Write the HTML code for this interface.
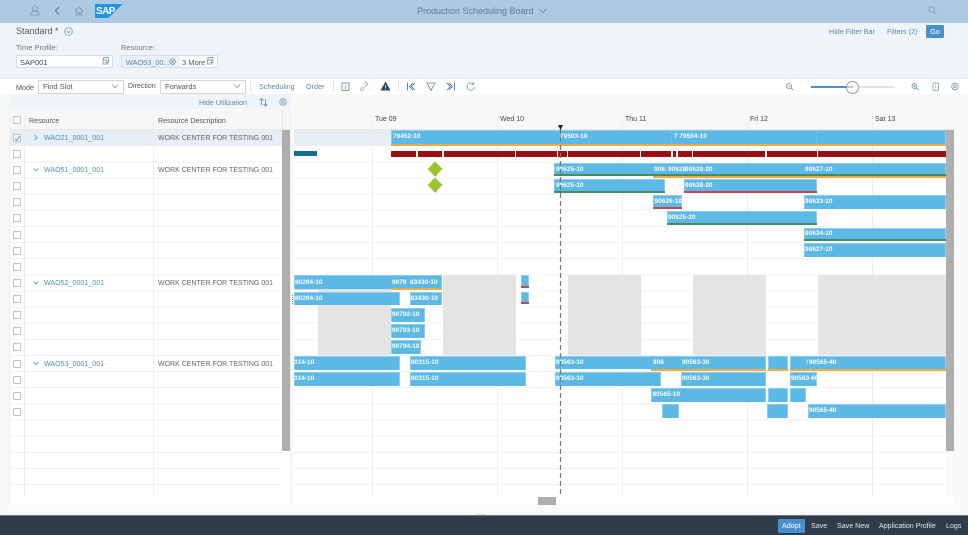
<!DOCTYPE html>
<html><head><meta charset="utf-8"><style>
html,body{margin:0;padding:0;width:968px;height:535px;overflow:hidden;background:#fafafa}
body{position:relative;font-family:"Liberation Sans",sans-serif;font-size:7.5px;color:#444;filter:blur(.35px)}
div,span,svg{position:absolute;box-sizing:border-box}
span{white-space:nowrap}
.b{background:#5cb8e4;border:1px solid #8fcdec;border-bottom:none}
.t{color:#fff;font-size:6.5px;font-weight:bold;line-height:9px;white-space:nowrap}
.o{background:#f0ab3c;height:2px}.g{background:#4b8a5c;height:2px}.r{background:#c5474f;height:2px}
.d{background:#9b0f12;top:150.5px;height:6px}
.c{left:13px;width:8px;height:8px;border:1px solid #c4c4c4;background:#fff}
.k{background:#e4e4e4}
.vl{background:#eeeeee;width:1px}
.lk{color:#4a91bf;font-size:7.1px}
.w{color:#666;font-size:7px;left:158px}
.tb{color:#5d86ab;font-size:7.2px}
.hd{font-size:7.1px;color:#555;top:116.5px}
.sel{height:14px;top:79.5px;background:#fff;border:1px solid #d5d5d5;font-size:7.5px;line-height:12px;padding-left:4px;color:#555}
.bt{color:#dfe6ec;font-size:7.1px;top:522px}
svg{overflow:visible;fill:none}
</style></head><body>

<!-- shell -->
<div style="left:0;top:0;width:968px;height:23px;background:#aec9e2"></div>
<svg style="left:0;top:0" width="968" height="23" stroke="#7d97b0" stroke-width=".8">
<circle cx="35" cy="8.5" r="2.6"/><path d="M31 15v-1.500c0-1.500 1.500-2.200 4-2.200s4 .7 4 2.200V15z"/>
<path d="M59 7l-3.500 3.800L59 14.500" stroke-width="1.100" stroke="#557a9c"/>
<path d="M75 11l4-3.800 4 3.800M76.200 10.200V15h5.600v-4.800M78 15v-2.500h2V15"/>
<circle cx="931.500" cy="9.500" r="2.800"/><path d="M933.700 11.700l2.800 2.800"/>
<path d="M539.500 9l3.500 3.500 3.500-3.500" stroke="#5e7f9f"/>
</svg>
<svg style="left:95px;top:4px" width="28" height="14"><polygon points="0,0 27.500,0 13.500,14 0,14" fill="#1f95de"/></svg>
<span style="left:96px;top:5.500px;color:#fff;font-weight:bold;font-size:10px;line-height:11px;letter-spacing:-.6px">SAP</span>
<span style="left:417px;top:6px;color:#5b7c9c;font-size:9px;line-height:11px">Production Scheduling Board</span>

<!-- filter bar -->
<div style="left:0;top:23px;width:968px;height:55px;background:#eff4f9"></div>
<span style="left:16px;top:26px;font-size:9px;color:#555;line-height:11px">Standard *</span>
<svg style="left:64px;top:27px" width="9" height="9" stroke="#5d86ab" stroke-width=".7"><circle cx="4.500" cy="4.500" r="3.800"/><path d="M2.800 4l1.700 1.700L6.200 4"/></svg>
<span style="left:16px;top:43px;color:#777;font-size:7.500px">Time Profile:</span>
<span style="left:121px;top:43px;color:#777;font-size:7.500px">Resource:</span>
<div style="left:16px;top:55px;width:97px;height:13px;background:#fff;border:1px solid #d5dde5"></div>
<span style="left:20px;top:57.500px;color:#444;font-size:7.500px">SAP001</span>
<div style="left:121px;top:55px;width:97px;height:13px;background:#fff;border:1px solid #d5dde5"></div>
<div style="left:122px;top:56px;width:58px;height:11px;background:#e9f0f6"></div>
<span style="left:126px;top:57.500px;color:#5d86ab;font-size:7.300px">WAO53_00...</span>
<span style="left:182px;top:57.500px;color:#555;font-size:7.500px">3 More</span>
<svg style="left:0;top:0" width="230" height="70" stroke="#5d86ab" stroke-width=".7">
<path d="M103.500 60v-2.500h5v5H106M103 60h4v4h-4z"/><path d="M208 60v-2.500h5v5H210.500M207.500 60h4v4h-4z"/>
<circle cx="172.500" cy="61.500" r="2.800"/><path d="M171.300 60.300l2.400 2.400M173.700 60.300l-2.400 2.400"/>
</svg>
<span class="tb" style="left:829px;top:27px">Hide Filter Bar</span>
<span class="tb" style="left:887px;top:27px">Filters (2)</span>
<div style="left:926px;top:25px;width:18px;height:13px;background:#4a90cc;border-radius:1px"></div>
<span style="left:930px;top:27px;color:#fff;font-size:7.500px">Go</span>

<!-- toolbar -->
<div style="left:0;top:78px;width:968px;height:1px;background:#e3e9ef"></div>
<div style="left:0;top:79px;width:968px;height:15px;background:#fff"></div>
<span style="left:16px;top:82.500px;font-size:7.200px;color:#555">Mode</span>
<div class="sel" style="left:38px;width:86px">Find Slot</div>
<span style="left:128px;top:83px;font-size:7px;color:#555">Direction</span>
<div class="sel" style="left:160px;width:86px">Forwards</div>
<div style="left:250px;top:80px;width:1px;height:12px;background:#e3e3e3"></div>
<span class="tb" style="left:259px;top:82px">Scheduling</span>
<span class="tb" style="left:306px;top:82px">Order</span>
<div style="left:333px;top:80px;width:1px;height:12px;background:#e3e3e3"></div>
<div style="left:398px;top:80px;width:1px;height:12px;background:#e3e3e3"></div>
<svg style="left:0;top:0" width="968" height="110" stroke="#5d86ab" stroke-width=".8">
<path d="M112 84.500l3 3 3-3M234 84.500l3 3 3-3" stroke="#8a9aa8"/>
<rect x="342" y="83" width="7" height="7.500"/><path d="M345.500 85v.8M345.500 86.500V89"/>
<path d="M362.500 89l4.500-4.500M362 87l-1 1a1.500 1.500 0 0 0 2.300 2.200l1-1M366 86l1.500-1.500a1.500 1.500 0 0 0-2-2L364 84" stroke="#8fa9c0" stroke-width=".7"/>
<polygon points="385.500,81.500 390.500,90.500 380.500,90.500" fill="#24486e" stroke="none"/><path d="M385.500 85v3M385.500 88.800v.8" stroke="#fff" stroke-width=".7"/>
<path d="M407.500 82.500v8M413 83l-3.500 3.500 3.500 3.500M415 83l-3.500 3.500 3.500 3.500" stroke="#2e6a9c"/>
<path d="M427 83h8l-4 7.500z"/>
<path d="M454.500 82.500v8M447 83l3.500 3.500-3.500 3.500M449 83l3.500 3.500-3.500 3.500" stroke="#2e6a9c"/>
<path d="M473.500 84a3.700 3.700 0 1 0 1 3M473.800 82v2.300h-2.300" stroke="#7e98b0"/>
<circle cx="789" cy="86" r="2.500"/><path d="M787.800 86h2.400M791 88l2 2"/>
<circle cx="914.500" cy="86" r="2.500"/><path d="M913.300 86h2.400M914.500 84.800v2.400M916.500 88l2 2"/>
<rect x="933" y="83" width="5.500" height="7.500" stroke="#8aa3ba"/><path d="M935.700 83v7.500" stroke="#8aa3ba" stroke-dasharray="1 1"/>
<circle cx="955" cy="86.500" r="3.300" stroke="#7e98b0"/><circle cx="955" cy="86.500" r="1.300" stroke="#7e98b0"/>
</svg>
<div style="left:811px;top:86px;width:84px;height:1.500px;background:#e3e3e3"></div>
<div style="left:811px;top:86px;width:42px;height:1.500px;background:#4f8fc4"></div>
<div style="left:846px;top:81px;width:13px;height:13px;border:1px solid #999;border-radius:50%;background:rgba(255,255,255,.6)"></div>

<!-- left panel -->
<div style="left:0;top:94px;width:968px;height:421px;background:#fafafa"></div>
<div style="left:9px;top:94px;width:282px;height:15px;background:#eff4f9"></div>
<span class="tb" style="left:199px;top:98px">Hide Utilization</span>
<svg style="left:0;top:0" width="300" height="110" stroke="#5d86ab" stroke-width=".8">
<path d="M261.500 98.500v7M259.500 100.500l2-2 2 2M265.500 99v7M263.500 104l2 2 2-2"/>
<circle cx="283" cy="102" r="3.300" stroke="#7e98b0"/><circle cx="283" cy="102" r="1.300" stroke="#7e98b0"/>
</svg>
<div style="left:9px;top:110px;width:282px;height:20px;background:#f7f7f7;border-bottom:1px solid #e8e8e8"></div>
<div style="left:9px;top:130px;width:273px;height:366px;background:#fff repeating-linear-gradient(to bottom,transparent 0,transparent 15.140px,#f1f1f1 15.140px,#f1f1f1 16.140px)"></div>
<div style="left:9px;top:130px;width:273px;height:16px;background:#e7eef6"></div>
<div style="left:9px;top:496px;width:282px;height:9px;background:#fff"></div>
<div class="vl" style="left:9px;top:110px;height:395px"></div>
<div class="vl" style="left:24px;top:110px;height:386px"></div>
<div class="vl" style="left:153px;top:110px;height:386px"></div>
<div class="vl" style="left:282px;top:110px;height:386px"></div>
<div style="left:282px;top:130px;width:9px;height:366px;background:#fff"></div>
<div style="left:282px;top:130px;width:9px;height:321px;background:#aeaeae"></div>
<div class="vl" style="left:290px;top:110px;height:395px"></div>
<div style="left:282px;top:110px;width:1px;height:20px;background:#e8e8e8"></div>
<span class="hd" style="left:29px">Resource</span>
<span class="hd" style="left:158px">Resource Description</span>
<div class="c" style="top:116px"></div>
<div class="c" style="top:134px;background:#f4f8fc"></div><svg style="left:14px;top:135px" width="7" height="7" stroke="#4a91bf" stroke-width=".8"><path d="M1 3.500l1.700 2L5.500 1"/></svg>
<div class="c" style="top:150px"></div><div class="c" style="top:166px"></div><div class="c" style="top:182px"></div><div class="c" style="top:198px"></div><div class="c" style="top:214px"></div><div class="c" style="top:231px"></div><div class="c" style="top:247px"></div><div class="c" style="top:263px"></div><div class="c" style="top:279px"></div><div class="c" style="top:295px"></div><div class="c" style="top:311px"></div><div class="c" style="top:327px"></div><div class="c" style="top:343px"></div><div class="c" style="top:360px"></div><div class="c" style="top:376px"></div><div class="c" style="top:392px"></div><div class="c" style="top:408px"></div>
<svg style="left:0;top:0" width="60" height="380" stroke="#4a91bf" stroke-width=".8">
<path d="M34.500 135l2.500 2.500-2.500 2.500M33.500 168.500l2.500 2.500 2.500-2.500M33.500 281.500l2.500 2.500 2.500-2.500M33.500 362l2.500 2.500 2.500-2.500"/></svg>
<span class="lk" style="left:44px;top:133.500px">WAO21_0001_001</span><span class="w" style="top:134.500px">WORK CENTER FOR TESTING 001</span>
<span class="lk" style="left:44px;top:165.500px">WAO51_0001_001</span><span class="w" style="top:166.500px">WORK CENTER FOR TESTING 001</span>
<span class="lk" style="left:44px;top:278.500px">WAO52_0001_001</span><span class="w" style="top:279.500px">WORK CENTER FOR TESTING 001</span>
<span class="lk" style="left:44px;top:359.500px">WAO53_0001_001</span><span class="w" style="top:360.500px">WORK CENTER FOR TESTING 001</span>

<!-- gantt -->
<div style="left:294px;top:94px;width:660px;height:36px;background:#f8f8f8;border-bottom:1px solid #e8e8e8"></div>
<div style="left:294px;top:130px;width:652px;height:366px;background:#fff repeating-linear-gradient(to bottom,transparent 0,transparent 15.140px,#f3f3f3 15.140px,#f3f3f3 16.140px)"></div>
<div style="left:294px;top:130px;width:652px;height:16px;background:#e7eef6"></div>
<div style="left:294px;top:496px;width:660px;height:9px;background:#fff"></div>
<span style="left:375px;top:116px;font-size:7px;color:#444">Tue 09</span>
<span style="left:500px;top:116px;font-size:7px;color:#444">Wed 10</span>
<span style="left:625px;top:116px;font-size:7px;color:#444">Thu 11</span>
<span style="left:750px;top:116px;font-size:7px;color:#444">Fri 12</span>
<span style="left:875px;top:116px;font-size:7px;color:#444">Sat 13</span>
<div class="vl" style="left:372px;top:122px;height:374px"></div>
<div class="vl" style="left:497px;top:122px;height:374px"></div>
<div class="vl" style="left:622px;top:122px;height:374px"></div>
<div class="vl" style="left:747px;top:122px;height:374px"></div>
<div class="vl" style="left:872px;top:122px;height:374px"></div>

<!-- non working -->
<div class="k" style="left:318px;top:289px;width:73px;height:66px"></div>
<div class="k" style="left:443px;top:275px;width:73px;height:80px"></div>
<div class="k" style="left:568px;top:275px;width:73px;height:80px"></div>
<div class="k" style="left:693px;top:275px;width:73px;height:80px"></div>
<div class="k" style="left:818px;top:275px;width:128px;height:80px"></div>

<!-- row 0 -->
<div class="b" style="left:391px;top:130px;width:555px;height:13.500px"></div>
<div class="o" style="left:391px;top:143.500px;width:555px"></div>
<div style="left:671px;top:131px;width:1px;height:12px;background:#79bfe3"></div>
<div style="left:816px;top:131px;width:1px;height:12px;background:#79bfe3"></div>
<span class="t" style="left:393px;top:132px">79452-10</span><span class="t" style="left:560px;top:132px">79503-10</span><span class="t" style="left:674px;top:132px">7 79504-10</span>
<!-- row 1 -->
<div style="left:294px;top:151px;width:23px;height:5px;background:#176b94"></div>
<div class="d" style="left:391px;width:25px"></div><div class="d" style="left:418px;width:24px"></div><div class="d" style="left:444px;width:71px"></div><div class="d" style="left:516px;width:41px"></div><div class="d" style="left:558px;width:9px"></div><div class="d" style="left:568px;width:72px"></div><div class="d" style="left:641px;width:30px"></div><div class="d" style="left:673px;width:3px"></div><div class="d" style="left:678px;width:14px"></div><div class="d" style="left:693px;width:72px"></div><div class="d" style="left:766.500px;width:50px"></div><div class="d" style="left:818px;width:128px"></div>
<!-- diamonds -->
<svg style="left:427px;top:161px" width="16" height="32"><polygon points="8,0.500 15.500,8 8,15.500 0.500,8" fill="#9cc42c"/><polygon points="8,16.500 15.500,24 8,31.500 0.500,24" fill="#9cc42c"/><path d="M7.500 14.500h1.500v1M7.500 30.500h1.500v1" stroke="#c9603c" stroke-width=".8"/></svg>
<!-- row 2 -->
<div class="b" style="left:554px;top:163px;width:392px;height:11px"></div>
<div class="g" style="left:554px;top:174px;width:392px"></div>
<div class="o" style="left:653px;top:176px;width:293px;height:1.500px"></div>
<span class="t" style="left:556px;top:165px">90625-10</span><span class="t" style="left:654px;top:165px">906:</span><span class="t" style="left:668px;top:165px">90628</span><span class="t" style="left:685px;top:165px">90628-20</span><span class="t" style="left:805px;top:165px">90627-10</span>
<!-- row 3 -->
<div class="b" style="left:554px;top:179px;width:111px;height:11.500px"></div><div class="g" style="left:554px;top:190.500px;width:111px"></div>
<div class="b" style="left:684px;top:179px;width:133px;height:11.500px"></div><div class="r" style="left:684px;top:190.500px;width:133px"></div>
<span class="t" style="left:556px;top:181px">90625-10</span><span class="t" style="left:685px;top:181px">90628-20</span>
<!-- row 4 -->
<div class="b" style="left:653px;top:195px;width:29px;height:11.500px"></div><div class="r" style="left:653px;top:206.500px;width:29px"></div>
<div class="b" style="left:804px;top:195px;width:142px;height:13.500px"></div>
<span class="t" style="left:654.500px;top:196.500px">90626-10</span><span class="t" style="left:805px;top:196.500px">90633-10</span>
<!-- row 5 -->
<div class="b" style="left:667px;top:211px;width:150px;height:11.500px"></div><div class="g" style="left:667px;top:222.500px;width:150px"></div>
<span class="t" style="left:668px;top:212.500px">90625-20</span>
<!-- row 6 -->
<div class="b" style="left:804px;top:228px;width:142px;height:11px"></div><div class="g" style="left:804px;top:239px;width:142px"></div>
<span class="t" style="left:805px;top:229px">90634-10</span>
<!-- row 7 -->
<div class="b" style="left:804px;top:243px;width:142px;height:13.500px"></div>
<span class="t" style="left:805px;top:245px">90627-10</span>
<!-- row 9 -->
<div class="b" style="left:294px;top:275px;width:148px;height:13.500px"></div>
<div class="o" style="left:391px;top:288px;width:51px"></div>
<div style="left:294px;top:288.500px;width:97px;height:1.500px;background:#ddd"></div>
<span class="t" style="left:295px;top:278px">80294-10</span><span class="t" style="left:392px;top:278px">9079</span><span class="t" style="left:410px;top:278px">83430-10</span>
<div class="b" style="left:521px;top:275px;width:8px;height:11px"></div><div class="r" style="left:521px;top:286px;width:8px"></div>
<!-- row 10 -->
<div class="b" style="left:294px;top:292px;width:106px;height:13px"></div><div class="b" style="left:410px;top:292px;width:32px;height:13px"></div>
<span class="t" style="left:295px;top:294px">80294-10</span><span class="t" style="left:410.500px;top:294px">83430-10</span>
<div class="b" style="left:521px;top:292px;width:8px;height:10px"></div><div class="r" style="left:521px;top:302px;width:8px"></div>
<svg style="left:291.500px;top:295px" width="2" height="10"><path d="M.5 0v9" stroke="#777" stroke-width="1" stroke-dasharray="1 1"/></svg>
<!-- rows 11-13 -->
<div class="b" style="left:391px;top:308px;width:34px;height:13.500px"></div><span class="t" style="left:392px;top:309.500px">90792-10</span>
<div class="b" style="left:391px;top:324px;width:34px;height:13.500px"></div><span class="t" style="left:392px;top:325.500px">90793-10</span>
<div class="b" style="left:391px;top:340px;width:30px;height:13.500px"></div><span class="t" style="left:392px;top:341.500px">90794-10</span>
<!-- row 14 -->
<div class="b" style="left:294px;top:356px;width:106px;height:13.500px"></div><div class="b" style="left:410px;top:356px;width:116px;height:13.500px"></div>
<div class="b" style="left:555px;top:356px;width:211px;height:13px"></div><div class="b" style="left:768px;top:356px;width:20px;height:13px"></div><div class="b" style="left:790px;top:356px;width:156px;height:13px"></div>
<div class="o" style="left:651px;top:369px;width:115px;height:1.500px"></div><div class="o" style="left:768px;top:369px;width:20px;height:1.500px"></div><div class="o" style="left:790px;top:369px;width:156px;height:1.500px"></div>
<span class="t" style="left:294px;top:357.500px">314-10</span><span class="t" style="left:411px;top:357.500px">80315-10</span><span class="t" style="left:556px;top:357.500px">90563-10</span><span class="t" style="left:653px;top:357.500px">906</span><span class="t" style="left:682px;top:357.500px">90563-30</span><span class="t" style="left:806px;top:357.500px">!</span><span class="t" style="left:809px;top:357.500px">90565-40</span>
<!-- row 15 -->
<div class="b" style="left:294px;top:372px;width:106px;height:13.500px"></div><div class="b" style="left:410px;top:372px;width:116px;height:13.500px"></div><div class="b" style="left:555px;top:372px;width:106px;height:13.500px"></div><div class="b" style="left:681px;top:372px;width:85px;height:13.500px"></div><div class="b" style="left:790px;top:372px;width:27px;height:13.500px"></div>
<span class="t" style="left:294px;top:373.500px">314-10</span><span class="t" style="left:411px;top:373.500px">80315-10</span><span class="t" style="left:556px;top:373.500px">90563-10</span><span class="t" style="left:682px;top:373.500px">90563-30</span><span class="t" style="left:791px;top:373.500px;width:26px;overflow:hidden">90563-60</span>
<!-- row 16 -->
<div class="b" style="left:651px;top:388px;width:115px;height:13.500px"></div><div class="b" style="left:768px;top:388px;width:20px;height:13.500px"></div><div class="b" style="left:790px;top:388px;width:16px;height:13.500px"></div>
<span class="t" style="left:652.500px;top:389.500px">90565-10</span>
<!-- row 17 -->
<div class="b" style="left:662px;top:404px;width:17px;height:13.500px"></div><div class="b" style="left:767px;top:404px;width:21px;height:13.500px"></div><div class="b" style="left:808px;top:404px;width:138px;height:13.500px"></div>
<span class="t" style="left:809px;top:405.500px">90565-40</span>

<!-- now line -->
<svg style="left:555px;top:124px" width="12" height="376"><path d="M5.500 5V373" stroke="#777" stroke-width="1.200" stroke-dasharray="5 3"/><polygon points="3,1 8,1 5.500,6" fill="#222"/></svg>

<!-- scrollbars -->
<div style="left:946px;top:130px;width:8px;height:321px;background:#aeaeae"></div>
<div style="left:946px;top:451px;width:8px;height:45px;background:#fafafa"></div>
<div style="left:538px;top:497px;width:18px;height:8px;background:#aeaeae"></div>

<!-- footer -->
<div style="left:0;top:515px;width:968px;height:20px;background:#2f3c4a;border-top:1px solid #6f7b86"></div>
<svg style="left:477px;top:514px" width="9" height="2"><path d="M0 .8h8" stroke="#aaa" stroke-dasharray="1 1"/></svg>
<div style="left:778px;top:519px;width:27px;height:14px;background:#4a8fcb;border-radius:1px"></div>
<span class="bt" style="left:782px;color:#fff">Adopt</span>
<span class="bt" style="left:811px">Save</span>
<span class="bt" style="left:837px">Save New</span>
<span class="bt" style="left:879px">Application Profile</span>
<span class="bt" style="left:946px">Logs</span>
</body></html>
